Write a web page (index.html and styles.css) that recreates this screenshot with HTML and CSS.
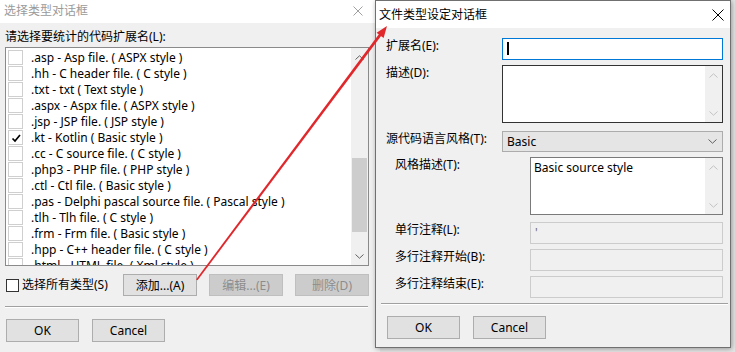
FILE: index.html
```html
<!DOCTYPE html>
<html lang="zh-CN">
<head>
  <meta charset="UTF-8">
  <title>文件类型设定</title>
  <link rel="stylesheet" href="styles.css">
</head>
<body>
  <!-- Select type dialog (inactive, behind) -->
  <div class="window window-left">
    <div class="titlebar">
      <span>选择类型对话框</span>
      <svg class="close" width="10" height="10" viewBox="0 0 10 10"><path d="M0.5 0.5 L9.5 9.5 M9.5 0.5 L0.5 9.5" stroke="#a0a0a0" stroke-width="1"/></svg>
    </div>
    <div class="body">
      <div class="caption">请选择要统计的代码扩展名(L):</div>
      <div class="listbox">
        <div class="list-rows">
          <div class="list-row"><span class="box"></span>.asp - Asp file. ( ASPX style )</div>
          <div class="list-row"><span class="box"></span>.hh - C header file. ( C style )</div>
          <div class="list-row"><span class="box"></span>.txt - txt ( Text style )</div>
          <div class="list-row"><span class="box"></span>.aspx - Aspx file. ( ASPX style )</div>
          <div class="list-row"><span class="box"></span>.jsp - JSP file. ( JSP style )</div>
          <div class="list-row"><span class="box"><svg width="12" height="12" viewBox="0 0 12 12"><path d="M2.5 6.5 L5 9 L10 3" fill="none" stroke="#000" stroke-width="1.7"/></svg></span>.kt - Kotlin ( Basic style )</div>
          <div class="list-row"><span class="box"></span>.cc - C source file. ( C style )</div>
          <div class="list-row"><span class="box"></span>.php3 - PHP file. ( PHP style )</div>
          <div class="list-row"><span class="box"></span>.ctl - Ctl file. ( Basic style )</div>
          <div class="list-row"><span class="box"></span>.pas - Delphi pascal source file. ( Pascal style )</div>
          <div class="list-row"><span class="box"></span>.tlh - Tlh file. ( C style )</div>
          <div class="list-row"><span class="box"></span>.frm - Frm file. ( Basic style )</div>
          <div class="list-row"><span class="box"></span>.hpp - C++ header file. ( C style )</div>
          <div class="list-row"><span class="box"></span>.html - HTML file. ( Xml style )</div>
        </div>
        <div class="vscroll">
          <svg class="chev" width="9" height="5" viewBox="0 0 9 5"><polyline points="0.5,4.5 4.5,0.8 8.5,4.5" fill="none" stroke="#606060"/></svg>
          <div class="thumb"></div>
          <svg class="chev chev-down" width="9" height="5" viewBox="0 0 9 5"><polyline points="0.5,0.5 4.5,4.2 8.5,0.5" fill="none" stroke="#606060"/></svg>
        </div>
      </div>

      <div class="action-row">
        <label class="check-all"><span class="check"></span>选择所有类型(S)</label>
        <div class="btn-group">
          <button class="btn">添加...(A)</button>
          <button class="btn" disabled>编辑...(E)</button>
          <button class="btn" disabled>删除(D)</button>
        </div>
      </div>

      <div class="separator"></div>

      <div class="dialog-buttons">
        <button class="btn">OK</button>
        <button class="btn">Cancel</button>
      </div>
    </div>
  </div>

  <!-- File type settings dialog (active) -->
  <div class="window window-right">
    <div class="titlebar">
      <span>文件类型设定对话框</span>
      <svg class="close" width="12" height="12" viewBox="0 0 12 12"><path d="M0.5 0.5 L11.5 11.5 M11.5 0.5 L0.5 11.5" stroke="#000" stroke-width="1"/></svg>
    </div>
    <div class="body">
      <div class="form-row row-ext">
        <div class="form-label">扩展名(E):</div>
        <div class="field field-focus"><span class="caret"></span></div>
      </div>
      <div class="form-row row-desc">
        <div class="form-label">描述(D):</div>
        <div class="memo memo-dark">
          <div class="memo-text"></div>
          <div class="memo-scroll">
            <svg width="9" height="5" viewBox="0 0 9 5"><polyline points="0.5,4.5 4.5,0.8 8.5,4.5" fill="none" stroke="#c2c2c2"/></svg>
            <svg width="9" height="5" viewBox="0 0 9 5"><polyline points="0.5,0.5 4.5,4.2 8.5,0.5" fill="none" stroke="#c2c2c2"/></svg>
          </div>
        </div>
      </div>
      <div class="form-row row-style">
        <div class="form-label">源代码语言风格(T):</div>
        <div class="select">
          <span>Basic</span>
          <svg width="9" height="5" viewBox="0 0 9 5"><polyline points="0.5,0.5 4.5,4.2 8.5,0.5" fill="none" stroke="#606060"/></svg>
        </div>
      </div>
      <div class="form-row indent row-style-desc">
        <div class="form-label">风格描述(T):</div>
        <div class="memo">
          <div class="memo-text">Basic source style</div>
          <div class="memo-scroll">
            <svg width="9" height="5" viewBox="0 0 9 5"><polyline points="0.5,4.5 4.5,0.8 8.5,4.5" fill="none" stroke="#c2c2c2"/></svg>
            <svg width="9" height="5" viewBox="0 0 9 5"><polyline points="0.5,0.5 4.5,4.2 8.5,0.5" fill="none" stroke="#c2c2c2"/></svg>
          </div>
        </div>
      </div>
      <div class="form-row indent row-comment">
        <div class="form-label">单行注释(L):</div>
        <div class="field field-disabled">'</div>
      </div>
      <div class="form-row indent row-comment">
        <div class="form-label">多行注释开始(B):</div>
        <div class="field field-disabled"></div>
      </div>
      <div class="form-row indent row-comment">
        <div class="form-label">多行注释结束(E):</div>
        <div class="field field-disabled"></div>
      </div>

      <div class="separator"></div>

      <div class="dialog-buttons">
        <button class="btn">OK</button>
        <button class="btn">Cancel</button>
      </div>
    </div>
  </div>

  <!-- Annotation arrow -->
  <svg class="annotation" width="735" height="352" viewBox="0 0 735 352">
    <polygon points="196,279.5 197.6,280.2 382.2,34.6 379.8,33" fill="#e0282c"/>
    <polygon points="387,26 383.6,38 376.6,32.8" fill="#e0282c"/>
  </svg>
</body>
</html>
```

FILE: styles.css
```css
/* Global */
body {
  margin: 0;
  width: 735px;
  height: 352px;
  position: relative;
  overflow: hidden;
  background-color: #e6e6e6;
  font-family: "Noto Sans", "Noto Sans CJK SC", sans-serif;
  font-size: 12px;
  line-height: 16px;
  color: #000;
}

/* Windows */
.window {
  position: absolute;
  top: 0;
  display: flex;
  flex-direction: column;
  background-color: #f0f0f0;
}

.window-left {
  left: 0;
  width: 380px;
  height: 352px;
}

.window-right {
  left: 375px;
  width: 354px;
  height: 346px;
  border: 1px solid #707070;
  box-shadow: 1px 1px 5px rgba(0, 0, 0, 0.35);
}

.titlebar {
  display: flex;
  align-items: center;
  justify-content: space-between;
  flex-shrink: 0;
  background-color: #fff;
}

.window-left .titlebar {
  height: 22px;
  padding: 0 17px 1px 4px;
  color: #9a9a9a;
}

.window-right .titlebar {
  height: 27px;
  padding: 0 6px 0 3px;
}

/* Left dialog body */
.window-left .body {
  padding: 6px 0 0 5px;
}

.caption {
  margin-bottom: 2px;
}

.listbox {
  display: flex;
  width: 362px;
  height: 217px;
  border: 1px solid #8a8a8a;
  background-color: #fff;
}

.list-rows {
  flex: 1;
  overflow: hidden;
  padding: 2px 0 0 2px;
}

.list-row {
  display: flex;
  align-items: flex-start;
  height: 16px;
  white-space: nowrap;
}

.box {
  display: flex;
  align-items: center;
  justify-content: center;
  flex-shrink: 0;
  width: 13px;
  height: 13px;
  margin-right: 8px;
  border: 1px solid #cfcfcf;
  background-color: #fff;
}

.vscroll {
  position: relative;
  flex-shrink: 0;
  width: 17px;
  background-color: #f0f0f0;
}

.chev {
  position: absolute;
  left: 4px;
  top: 7px;
}

.chev-down {
  top: auto;
  bottom: 6px;
}

.thumb {
  position: absolute;
  left: 1px;
  top: 110px;
  width: 15px;
  height: 74px;
  background-color: #cdcdcd;
}

.action-row {
  display: flex;
  align-items: center;
  justify-content: space-between;
  width: 364px;
  height: 22px;
  margin-top: 8px;
}

.check-all {
  display: flex;
  align-items: center;
  padding-left: 1px;
}

.check {
  width: 11px;
  height: 11px;
  margin-right: 3px;
  border: 1px solid #333;
  background-color: #fff;
}

.btn-group {
  display: flex;
  gap: 12px;
}

/* Buttons */
.btn {
  width: 74px;
  height: 22px;
  padding: 0;
  border: 1px solid #adadad;
  background-color: #e1e1e1;
  font-family: inherit;
  font-size: 12px;
  color: #000;
}

.btn:disabled {
  border-color: #bfbfbf;
  background-color: #cccccc;
  color: #8c8c8c;
}

.separator {
  height: 0;
  border-top: 1px solid #a0a0a0;
  border-bottom: 1px solid #fff;
}

.window-left .separator {
  width: 363px;
  margin-top: 10px;
}

.dialog-buttons {
  display: flex;
  gap: 13px;
}

.dialog-buttons .btn {
  width: 73px;
  height: 23px;
}

.window-left .dialog-buttons {
  margin: 11px 0 0 1px;
}

/* Right dialog body */
.window-right .body {
  padding: 10px 2px 0 5px;
}

.form-row {
  display: flex;
  align-items: flex-start;
  margin-left: 5px;
}

.form-label {
  width: 116px;
  white-space: nowrap;
}

.form-row.indent {
  margin-left: 14px;
}

.form-row.indent .form-label {
  width: 135px;
}

.row-ext {
  height: 22px;
}

.row-desc {
  height: 58px;
  margin-top: 5px;
}

.row-style {
  height: 21px;
  margin-top: 8px;
}

.row-style-desc {
  height: 58px;
  margin-top: 5px;
}

.row-comment {
  height: 22px;
  margin-top: 5px;
}

.row-style-desc + .row-comment {
  margin-top: 7px;
}

.field {
  box-sizing: border-box;
  width: 221px;
  height: 100%;
  padding: 2px 4px;
  border: 1px solid #7a7a7a;
  background-color: #fff;
}

.field-focus {
  border-color: #0078d7;
}

.caret {
  display: inline-block;
  width: 2px;
  height: 13px;
  margin-top: 1px;
  background-color: #000;
}

.indent .field {
  width: 193px;
}

.field-disabled {
  border-color: #cccccc;
  background-color: #f0f0f0;
  color: #6d6d6d;
}

.memo {
  box-sizing: border-box;
  display: flex;
  width: 193px;
  height: 100%;
  border: 1px solid #7a7a7a;
  background-color: #fff;
}

.memo-dark {
  width: 221px;
  border-color: #333;
}

.memo-text {
  flex: 1;
  padding: 2px 3px;
}

.memo-scroll {
  display: flex;
  flex-direction: column;
  justify-content: space-between;
  align-items: center;
  width: 17px;
  padding: 7px 0 6px;
  background-color: #f0f0f0;
}

.select {
  box-sizing: border-box;
  display: flex;
  align-items: center;
  justify-content: space-between;
  width: 221px;
  height: 100%;
  padding: 0 5px 0 4px;
  border: 1px solid #acacac;
  background-color: #e5e5e5;
}

.window-right .separator {
  margin-top: 5px;
}

.window-right .dialog-buttons {
  margin: 11px 0 0 6px;
}

/* Annotation */
.annotation {
  position: absolute;
  left: 0;
  top: 0;
  pointer-events: none;
}
```
